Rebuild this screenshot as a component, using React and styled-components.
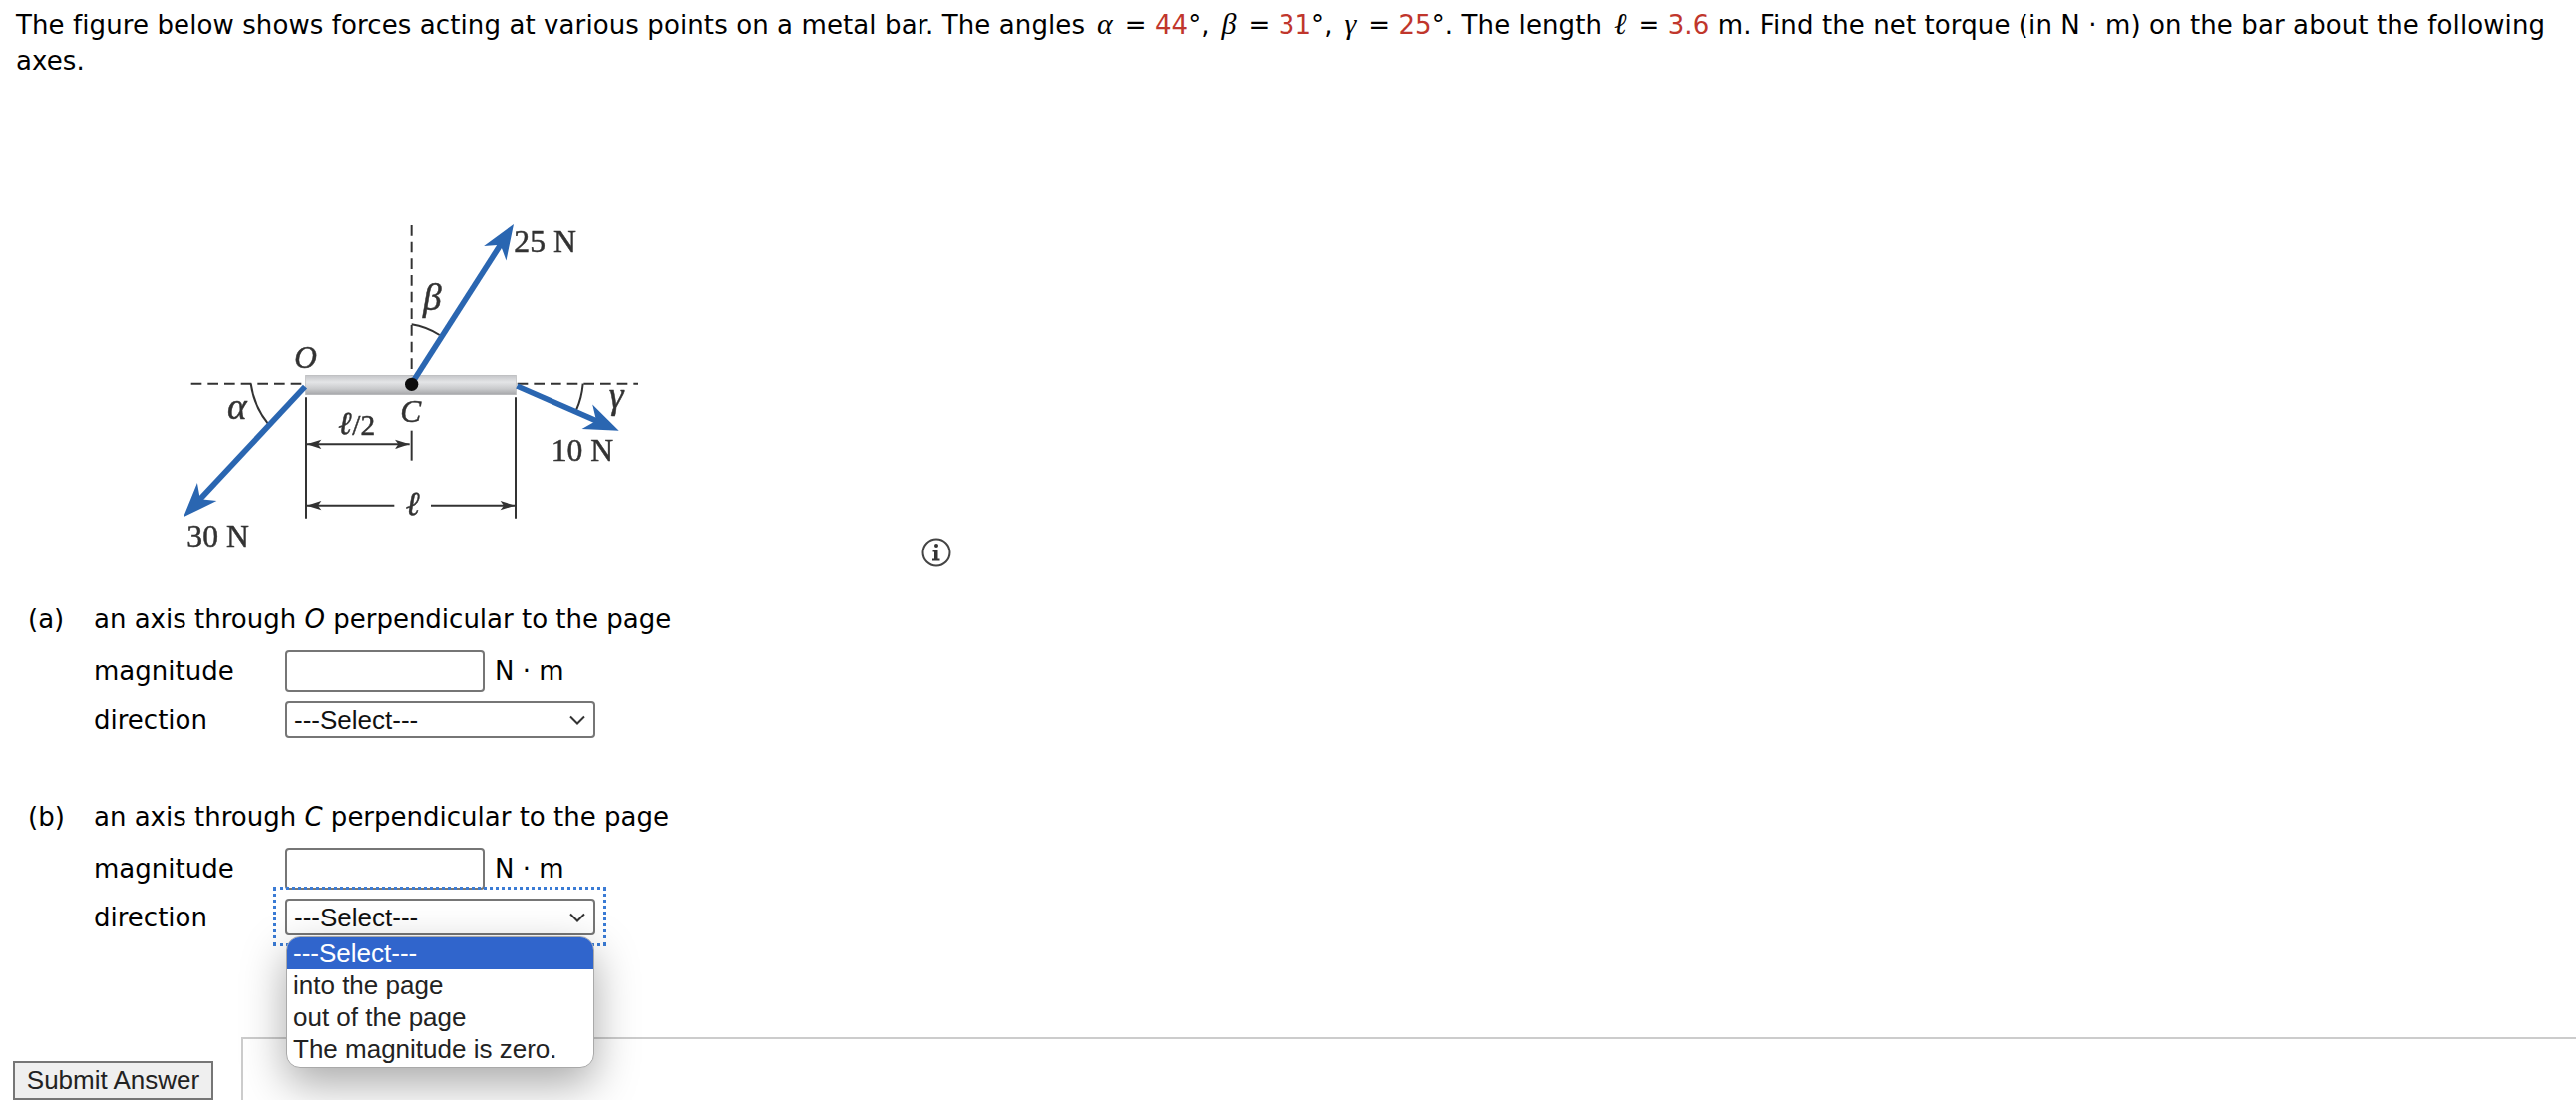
import styled, { createGlobalStyle } from "styled-components";

const GlobalStyle = createGlobalStyle`
  html, body {
    margin: 0;
    height: 100%;
    overflow: hidden;
    background: #fff;
  }
  body {
    font-family: "DejaVu Sans", Verdana, sans-serif;
    font-size: 26px;
    color: #000;
  }
`;

const Prompt = styled.p`
  margin: 6px 0 0;
  padding-left: 16px;
  line-height: 36px;
  letter-spacing: 0.1px;
  white-space: nowrap;
`;

const Value = styled.span`
  color: #c0362c;
`;

const Symbol = styled.i`
  font-family: "Liberation Serif", "DejaVu Serif", serif;
  font-size: 30px;
  margin: 0 3.5px;
`;

const FigureRow = styled.div`
  display: flex;
  align-items: flex-end;
  margin-top: 122px;
  padding-left: 160px;
`;

const InfoButton = styled.svg`
  width: 32px;
  height: 32px;
  margin: 0 0 1px 243px;
`;

const Part = styled.section`
  margin-top: ${(p) => p.$top}px;
  padding-left: 28px;
`;

const PartTitle = styled.div`
  display: flex;
  line-height: 36px;
`;

const PartLetter = styled.span`
  width: 66px;
`;

const Field = styled.div`
  display: flex;
  align-items: center;
  height: ${(p) => p.$height}px;
  margin-top: ${(p) => p.$top}px;
  padding-left: 66px;
`;

const FieldLabel = styled.span`
  width: 192px;
`;

const NumberInput = styled.input`
  box-sizing: border-box;
  width: 200px;
  height: 42px;
  border: 2px solid #767676;
  border-radius: 4px;
  background: #fff;
  margin-right: 10px;
`;

const SelectWrap = styled.div`
  position: relative;
  width: 311px;
  height: 37px;

  ${(p) =>
    p.$open &&
    `
    &::before {
      content: "";
      position: absolute;
      left: -12px;
      right: -11px;
      top: -12px;
      bottom: -11px;
      border: 3px dotted #3a7bd5;
    }
  `}
`;

const Select = styled.select`
  position: relative;
  display: block;
  box-sizing: border-box;
  width: 100%;
  height: 100%;
  appearance: none;
  padding: 0 0 0 7px;
  border: 2px solid #767676;
  border-radius: 4px;
  background: #fff;
  color: #111;
  font-family: "Liberation Sans", Arial, sans-serif;
  font-size: 26px;
`;

const Chevron = styled.svg`
  position: absolute;
  right: 9px;
  top: 13px;
  width: 18px;
  height: 12px;
  pointer-events: none;
`;

const Menu = styled.ul`
  position: absolute;
  z-index: 2;
  left: 1px;
  top: 38px;
  box-sizing: border-box;
  width: 309px;
  height: 132px;
  margin: 0;
  padding: 0;
  list-style: none;
  overflow: hidden;
  background: #fff;
  border: 1px solid #a9a9a9;
  border-radius: 14px;
  box-shadow: 0 16px 44px rgba(0, 0, 0, 0.34);
  font-family: "Liberation Sans", Arial, sans-serif;
  font-size: 26px;
`;

const MenuItem = styled.li`
  height: 32px;
  line-height: 32px;
  padding-left: 6px;
  white-space: nowrap;
  color: ${(p) => (p.$active ? "#fff" : "#222")};
  background: ${(p) => (p.$active ? "#3065cc" : "transparent")};
`;

const Footer = styled.div`
  display: flex;
  align-items: flex-start;
  margin-top: 102px;
  padding-left: 13px;
`;

const SubmitButton = styled.button`
  box-sizing: border-box;
  width: 201px;
  height: 39px;
  margin-top: 24px;
  padding: 0;
  border: 2px solid #767676;
  background: #efefef;
  color: #222;
  font-family: "Liberation Sans", Arial, sans-serif;
  font-size: 26px;
`;

const ResultBox = styled.div`
  flex: 1;
  height: 63px;
  margin-left: 28px;
  border-top: 2px solid #ccc;
  border-left: 2px solid #ccc;
`;

const BLUE = "#2b66b1";
const INK = "#333";

// shaft plus barbed head, coordinates in the figure's own units
function ForceArrow({ from, to, length = 104, spread = 40, notch = 74 }) {
  const [x1, y1] = from;
  const [x2, y2] = to;
  const d = Math.hypot(x2 - x1, y2 - y1);
  const ux = (x2 - x1) / d;
  const uy = (y2 - y1) / d;
  const at = (back, side) =>
    `${x2 - ux * back - uy * side},${y2 - uy * back + ux * side}`;
  return (
    <g>
      <line x1={x1} y1={y1} x2={x2 - ux * 70} y2={y2 - uy * 70} stroke={BLUE} strokeWidth="17" />
      <polygon
        fill={BLUE}
        points={`${x2},${y2} ${at(length, spread)} ${at(notch, 0)} ${at(length, -spread)}`}
      />
    </g>
  );
}

function DimensionArrow({ x1, x2, y, left, right }) {
  return (
    <g fill={INK}>
      <line x1={x1} y1={y} x2={x2} y2={y} stroke={INK} strokeWidth="6" />
      {left && <polygon points={`${x1},${y} ${x1 + 44},${y - 14} ${x1 + 34},${y} ${x1 + 44},${y + 14}`} />}
      {right && <polygon points={`${x2},${y} ${x2 - 44},${y - 14} ${x2 - 34},${y} ${x2 - 44},${y + 14}`} />}
    </g>
  );
}

const FigureSvg = styled.svg`
  display: block;
  width: 520px;
  height: 370px;

  text {
    font-family: "Liberation Serif", "DejaVu Serif", serif;
    fill: #333;
    stroke: #333;
    stroke-width: 1.5;
  }
`;

function BarFigure() {
  return (
    <FigureSvg viewBox="0 0 1560 1110">
      <defs>
        <linearGradient id="bar" x1="0" y1="0" x2="0" y2="1">
          <stop offset="0" stopColor="#c4c5c8" />
          <stop offset="0.35" stopColor="#e4e5e7" />
          <stop offset="0.7" stopColor="#c9cacc" />
          <stop offset="1" stopColor="#a5a6a9" />
        </linearGradient>
        <filter id="soft">
          <feGaussianBlur stdDeviation="1.6" />
        </filter>
      </defs>
      <g filter="url(#soft)">
        <g stroke={INK} strokeWidth="6" strokeDasharray="32 18" fill="none">
          <line x1="758" y1="75" x2="758" y2="530" />
          <line x1="95" y1="551" x2="438" y2="551" />
          <line x1="1076" y1="551" x2="1440" y2="551" />
        </g>
        <g stroke={INK} strokeWidth="6" fill="none">
          <line x1="441" y1="592" x2="441" y2="956" />
          <line x1="1071" y1="592" x2="1071" y2="956" />
          <line x1="758" y1="692" x2="758" y2="782" />
          <path d="M275 551 Q285 620 326 670" />
          <path d="M758 373 Q802 380 842 405" />
          <path d="M1274 551 Q1270 595 1254 630" />
        </g>
        <rect x="440" y="526" width="632" height="58" fill="url(#bar)" stroke="#b5b6b8" strokeWidth="2" />
        <ForceArrow from={[765, 540]} to={[1065, 72]} />
        <ForceArrow from={[438, 560]} to={[72, 952]} />
        <ForceArrow from={[1075, 558]} to={[1382, 692]} />
        <circle cx="758" cy="553" r="20" fill="#111" />
        <DimensionArrow x1={443} x2={752} y={733} left right />
        <DimensionArrow x1={443} x2={706} y={917} left />
        <DimensionArrow x1={816} x2={1069} y={917} right />
        <text x="1066" y="157" fontSize="95">25 N</text>
        <text x="82" y="1040" fontSize="95">30 N</text>
        <text x="1178" y="782" fontSize="95">10 N</text>
        <text x="406" y="505" fontSize="94" fontStyle="italic">O</text>
        <text x="724" y="667" fontSize="94" fontStyle="italic">C</text>
        <text x="204" y="656" fontSize="112" fontStyle="italic">α</text>
        <text x="792" y="330" fontSize="112" fontStyle="italic">β</text>
        <text x="1352" y="625" fontSize="112" fontStyle="italic">γ</text>
        <text x="538" y="702" fontSize="96" fontStyle="italic">ℓ</text>
        <text x="580" y="704" fontSize="88">/2</text>
        <text x="740" y="945" fontSize="100" fontStyle="italic">ℓ</text>
      </g>
    </FigureSvg>
  );
}

function InfoIcon() {
  return (
    <InfoButton viewBox="0 0 32 32">
      <circle cx="16" cy="16" r="13.5" fill="none" stroke="#444" strokeWidth="2" />
      <circle cx="16" cy="9" r="2" fill="#333" />
      <path d="M12.5 13.5h5v9h2v2h-7.500v-2h2v-7h-1.500z" fill="#333" />
    </InfoButton>
  );
}

function DirectionSelect({ open }) {
  return (
    <SelectWrap $open={open}>
      <Select defaultValue="">
        <option value="">---Select---</option>
        <option>into the page</option>
        <option>out of the page</option>
        <option>The magnitude is zero.</option>
      </Select>
      <Chevron viewBox="0 0 18 12">
        <path d="M2 2.500l7 7 7-7" fill="none" stroke="#333" strokeWidth="2" />
      </Chevron>
      {open && (
        <Menu>
          <MenuItem $active>---Select---</MenuItem>
          <MenuItem>into the page</MenuItem>
          <MenuItem>out of the page</MenuItem>
          <MenuItem>The magnitude is zero.</MenuItem>
        </Menu>
      )}
    </SelectWrap>
  );
}

function AxisPart({ letter, point, top, open }) {
  return (
    <Part $top={top}>
      <PartTitle>
        <PartLetter>({letter})</PartLetter>
        <span>
          an axis through <em>{point}</em> perpendicular to the page
        </span>
      </PartTitle>
      <Field $top={13} $height={42}>
        <FieldLabel>magnitude</FieldLabel>
        <NumberInput type="text" />
        <span>N · m</span>
      </Field>
      <Field $top={9} $height={37}>
        <FieldLabel>direction</FieldLabel>
        <DirectionSelect open={open} />
      </Field>
    </Part>
  );
}

export default function App() {
  return (
    <>
      <GlobalStyle />
      <Prompt>
        The figure below shows forces acting at various points on a metal bar. The angles{" "}
        <Symbol>α</Symbol> = <Value>44</Value>°, <Symbol>β</Symbol> = <Value>31</Value>°,{" "}
        <Symbol>γ</Symbol> = <Value>25</Value>°. The length <Symbol>ℓ</Symbol> ={" "}
        <Value>3.6</Value> m. Find the net torque (in N · m) on the bar about the following
        <br />
        axes.
      </Prompt>
      <FigureRow>
        <BarFigure />
        <InfoIcon />
      </FigureRow>
      <AxisPart letter="a" point="O" top={32} />
      <AxisPart letter="b" point="C" top={61} open />
      <Footer>
        <SubmitButton>Submit Answer</SubmitButton>
        <ResultBox />
      </Footer>
    </>
  );
}
